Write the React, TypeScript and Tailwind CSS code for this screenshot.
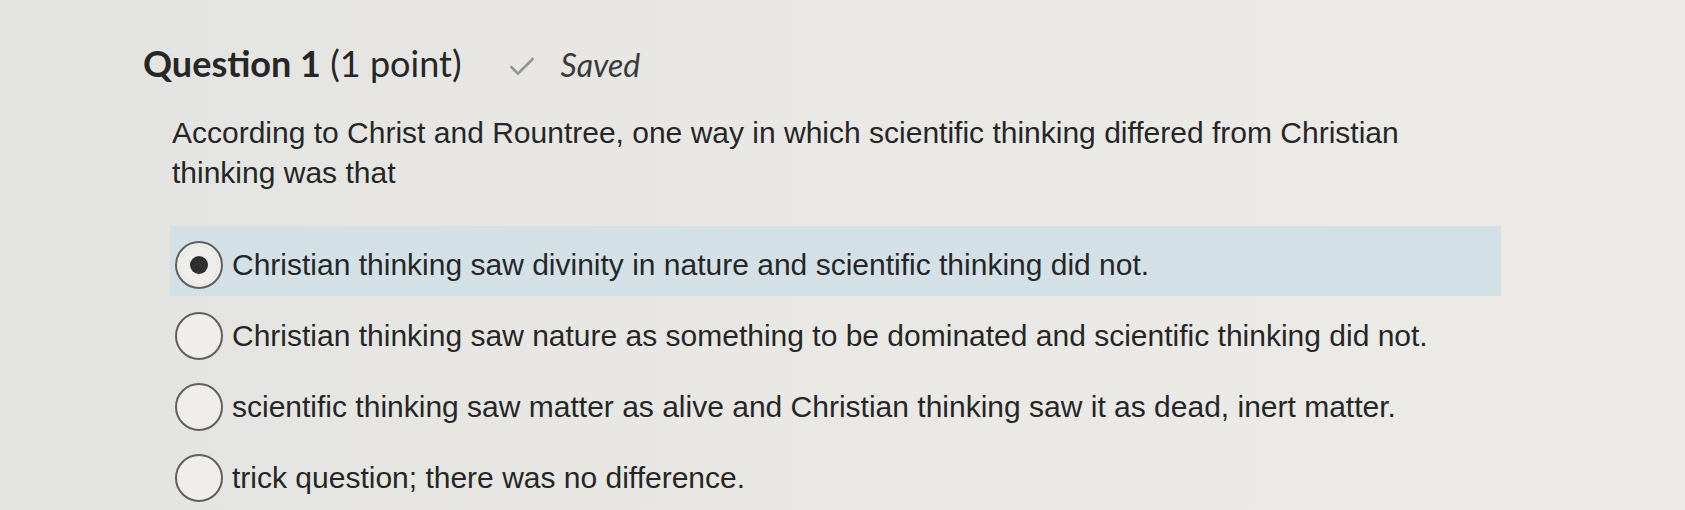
import { Check } from "lucide-react"

const options = [
  "Christian thinking saw divinity in nature and scientific thinking did not.",
  "Christian thinking saw nature as something to be dominated and scientific thinking did not.",
  "scientific thinking saw matter as alive and Christian thinking saw it as dead, inert matter.",
  "trick question; there was no difference.",
]

function Radio({ checked }: { checked: boolean }) {
  return (
    <span className="flex h-[48px] w-[48px] shrink-0 items-center justify-center rounded-full border-2 border-[#5f5f5f] bg-[#efeeeb]">
      {checked && (
        <span className="flex h-[40px] w-[40px] items-center justify-center rounded-full border-2 border-[#e8e8e6]">
          <span className="h-[18px] w-[18px] rounded-full bg-[#2f2f2f]" />
        </span>
      )}
    </span>
  )
}

export default function App() {
  const selected = 0

  return (
    <div className="h-[510px] w-full overflow-hidden bg-gradient-to-r from-[#e3e3e1] via-[#e9e8e5] to-[#ecebe8] pt-[39px] text-[#262626]">
      <div className="flex items-baseline pl-[143px] font-['Lato',sans-serif]">
        <h1 className="text-[36px] leading-[48px]">
          <span className="font-bold">Question 1</span> <span>(1 point)</span>
        </h1>
        <span className="ml-[44px] flex items-baseline gap-[23px] text-[#3a3a3a]">
          <Check className="h-[32px] w-[32px] translate-y-[2px] self-center text-[#959595]" strokeWidth={2} />
          <span className="text-[32px] italic">Saved</span>
        </span>
      </div>

      <p className="mt-[24px] pl-[172px] pr-[260px] font-['Liberation_Sans',Arial,sans-serif] text-[30px] leading-[40px]">
        According to Christ and Rountree, one way in which scientific thinking differed from Christian thinking was that
      </p>

      <div className="mt-[33px] ml-[170px] flex w-[1331px] flex-col gap-[1px] font-['Liberation_Sans',Arial,sans-serif] text-[30px]">
        {options.map((opt, i) => (
          <label
            key={i}
            className={
              "flex h-[70px] items-center gap-[9px] pl-[5px] pt-[8px] " + (i === selected ? "bg-[#d3e0e6]" : "")
            }
          >
            <Radio checked={i === selected} />
            <span className="leading-[34px]">{opt}</span>
          </label>
        ))}
      </div>
    </div>
  )
}
